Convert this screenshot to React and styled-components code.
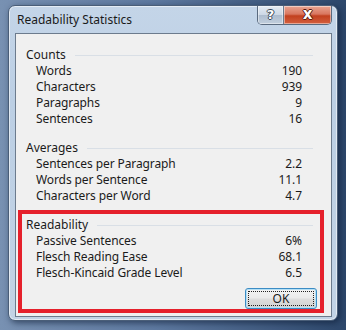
import styled, { createGlobalStyle } from "styled-components";

const counts = [
  ["Words", "190"],
  ["Characters", "939"],
  ["Paragraphs", "9"],
  ["Sentences", "16"],
];

const averages = [
  ["Sentences per Paragraph", "2.2"],
  ["Words per Sentence", "11.1"],
  ["Characters per Word", "4.7"],
];

const readability = [
  ["Passive Sentences", "6%"],
  ["Flesch Reading Ease", "68.1"],
  ["Flesch-Kincaid Grade Level", "6.5"],
];

function Group({ title, rows, $inBox }) {
  return (
    <GroupBox $inBox={$inBox}>
      <Heading>
        <span>{title}</span>
        <Rule />
      </Heading>
      {rows.map(([label, value]) => (
        <Row key={label}>
          <span>{label}</span>
          <span>{value}</span>
        </Row>
      ))}
    </GroupBox>
  );
}

export default function App() {
  return (
    <>
      <GlobalStyle />
      <Desktop>
        <Window>
          <TitleBar>
            <Title>Readability Statistics</Title>
            <Caption>
              <HelpButton>?</HelpButton>
              <CloseButton>x</CloseButton>
            </Caption>
          </TitleBar>
          <Client>
            <Group title="Counts" rows={counts} />
            <Spacer />
            <Group title="Averages" rows={averages} />
            <Highlight>
              <Group title="Readability" rows={readability} $inBox />
              <ButtonRow>
                <OkButton>
                  <Focus>OK</Focus>
                </OkButton>
              </ButtonRow>
            </Highlight>
          </Client>
        </Window>
      </Desktop>
    </>
  );
}

const GlobalStyle = createGlobalStyle`
  body {
    margin: 0;
    font-family: "Noto Sans", "Open Sans", sans-serif;
  }
`;

const Desktop = styled.div`
  width: 346px;
  height: 330px;
  padding: 5px 8px 0 8px;
  box-sizing: border-box;
  background: linear-gradient(90deg, #7891b2 0%, #5e79a0 45%, #2d476b 100%);
`;

const Window = styled.div`
  width: 330px;
  height: 316px;
  box-sizing: border-box;
  border: 1px solid #4a5e78;
  border-radius: 7px;
  background: linear-gradient(180deg, #c4d5e8 0%, #bccfe4 30%, #c2d3e5 100%);
  box-shadow: inset 0 0 0 1px rgba(255, 255, 255, 0.55),
    2px 2px 6px rgba(10, 25, 50, 0.6);
  padding: 0 5px 3px 6px;
`;

const TitleBar = styled.div`
  height: 27px;
  display: flex;
  align-items: flex-start;
  justify-content: space-between;
`;

const Title = styled.div`
  padding: 6px 0 0 2px;
  font-size: 12px;
  line-height: 16px;
  color: #1a1a1a;
`;

const Caption = styled.div`
  display: flex;
  height: 18px;
  border: 1px solid #5a6a7e;
  border-top: none;
  border-radius: 0 0 5px 5px;
  overflow: hidden;
`;

const CaptionButton = styled.div`
  display: flex;
  align-items: center;
  justify-content: center;
  font-family: "DejaVu Sans", sans-serif;
  font-weight: bold;
  color: #fff;
  line-height: 18px;
  box-shadow: inset 0 0 0 1px rgba(255, 255, 255, 0.45);
`;

const HelpButton = styled(CaptionButton)`
  width: 25px;
  font-size: 13px;
  background: linear-gradient(180deg, #e4ebf3 0%, #cdd8e5 48%, #aebdcf 52%, #c2cfdd 100%);
  border-right: 1px solid #6b7b8f;
  text-shadow: 1px 0 0 #3b4858, -1px 0 0 #3b4858, 0 1px 0 #3b4858, 0 -1px 0 #3b4858;
`;

const CloseButton = styled(CaptionButton)`
  width: 47px;
  font-size: 15px;
  padding-bottom: 3px;
  box-sizing: border-box;
  background: linear-gradient(180deg, #e9a592 0%, #d9765f 45%, #c2401f 55%, #d4603f 100%);
  text-shadow: 1px 0 0 #5a1a10, -1px 0 0 #5a1a10, 0 1px 0 #5a1a10, 0 -1px 0 #5a1a10;
`;

const Client = styled.div`
  height: 284px;
  box-sizing: border-box;
  border: 1px solid #6c7b8d;
  background: #f0f0f0;
  padding-top: 13px;
  font-size: 12px;
  color: #1b1b1b;
`;

const GroupBox = styled.div`
  padding: ${(p) => (p.$inBox ? "0 4px 0 4px" : "0 18px 0 10px")};
`;

const Heading = styled.div`
  display: flex;
  align-items: center;
  height: 16px;
  line-height: 16px;
`;

const Rule = styled.div`
  flex: 1;
  height: 1px;
  margin-left: 9px;
  background: #d9dfe6;
`;

const Row = styled.div`
  display: flex;
  justify-content: space-between;
  height: 16px;
  line-height: 16px;
  padding: 0 11px 0 10px;
  letter-spacing: -0.1px;
`;

const Spacer = styled.div`
  height: 13px;
`;

const Highlight = styled.div`
  margin: 6px 7px 0 2px;
  border: 4px solid #e5202b;
  padding: 3px 3px 0 0;
`;

const ButtonRow = styled.div`
  display: flex;
  justify-content: flex-end;
  padding-top: 7px;
`;

const OkButton = styled.div`
  width: 72px;
  height: 21px;
  box-sizing: border-box;
  border: 1px solid #3c8cc4;
  border-radius: 3px;
  padding: 2px;
  background: linear-gradient(180deg, #f3f3f3 0%, #ebebeb 45%, #dddddd 55%, #d2d2d2 100%);
  box-shadow: inset 0 0 0 1px #b4e0f6;
`;

const Focus = styled.div`
  height: 100%;
  box-sizing: border-box;
  border: 1px dotted #222;
  display: flex;
  align-items: center;
  justify-content: center;
  font-size: 12px;
  line-height: 14px;
`;
